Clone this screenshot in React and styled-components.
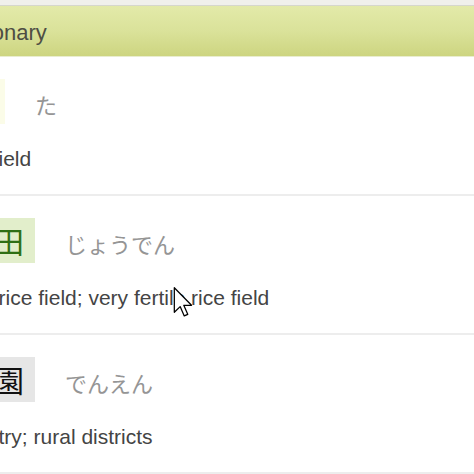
import React from "react";
import styled, { createGlobalStyle } from "styled-components";

const GlobalStyle = createGlobalStyle`
    html, body {
        margin: 0;
        padding: 0;
        background: #ffffff;
    }
    body {
        font-family: "Liberation Sans", Arial, "Noto Sans CJK JP", sans-serif;
    }
`;

const Screen = styled.div`
    position: relative;
    width: 474px;
    height: 474px;
    overflow: hidden;
    background: #ffffff;
`;

const Page = styled.div`
    margin-left: -47px;
    padding-top: 5px;
    background: #f0f0eb;
`;

const Header = styled.div`
    display: flex;
    align-items: center;
    height: 47px;
    padding-top: 3px;
    text-indent: -4px;
    border-top: 1px solid #d6d7cc;
    border-bottom: 1px solid #e9edcf;
    background: linear-gradient(to bottom, #e3eaa9 0%, #dae29a 50%, #cdd580 100%);
    color: #4e4e44;
    font-size: 22px;
`;

const List = styled.div`
    background: #ffffff;
`;

const Entry = styled.div`
    padding: 22px 0 20px;
    border-bottom: 2px solid #ededed;
`;

const Top = styled.div`
    display: flex;
    align-items: center;
    gap: 30px;
`;

const Kanji = styled.div`
    height: 45px;
    line-height: 45px;
    padding: 0 11px;
    font-family: "Noto Sans CJK JP", sans-serif;
    font-size: 30px;
    background: ${(p) => p.$bg};
    color: ${(p) => p.$fg};
`;

const Reading = styled.div`
    padding-top: 4px;
    font-family: "Noto Sans CJK JP", sans-serif;
    font-size: 22px;
    color: #959595;
`;

const Meaning = styled.div`
    margin-top: 20px;
    line-height: 30px;
    font-size: 21px;
    color: #444444;
    white-space: nowrap;
`;

const Cursor = styled.svg`
    position: absolute;
    left: 173px;
    top: 287px;
`;

const entries = [
    { word: "田", reading: "た", meaning: "rice field", bg: "#fbfce8", fg: "#a39a2a" },
    { word: "上田", reading: "じょうでん", meaning: "best rice field; very fertile rice field", bg: "#e2eecb", fg: "#2f6f14" },
    { word: "田園", reading: "でんえん", meaning: "country; rural districts", bg: "#e6e6e6", fg: "#111111" },
];

const App = () => {
    return (
        <Screen>
            <GlobalStyle />
            <Page>
                <Header>Dictionary</Header>
                <List>
                    {entries.map((e, i) => (
                        <Entry key={i}>
                            <Top>
                                <Kanji $bg={e.bg} $fg={e.fg}>{e.word}</Kanji>
                                <Reading>{e.reading}</Reading>
                            </Top>
                            <Meaning>{e.meaning}</Meaning>
                        </Entry>
                    ))}
                </List>
            </Page>
            <Cursor width="20" height="30" viewBox="0 0 12 19">
                <path
                    d="M0.5 0.5 L0.5 16 L4.2 12.4 L6.8 18.3 L9 17.3 L6.5 11.6 L11.4 11.6 Z"
                    fill="#ffffff"
                    stroke="#000000"
                    strokeWidth="0.8"
                    strokeLinejoin="round"
                />
            </Cursor>
        </Screen>
    );
};

export default App;
